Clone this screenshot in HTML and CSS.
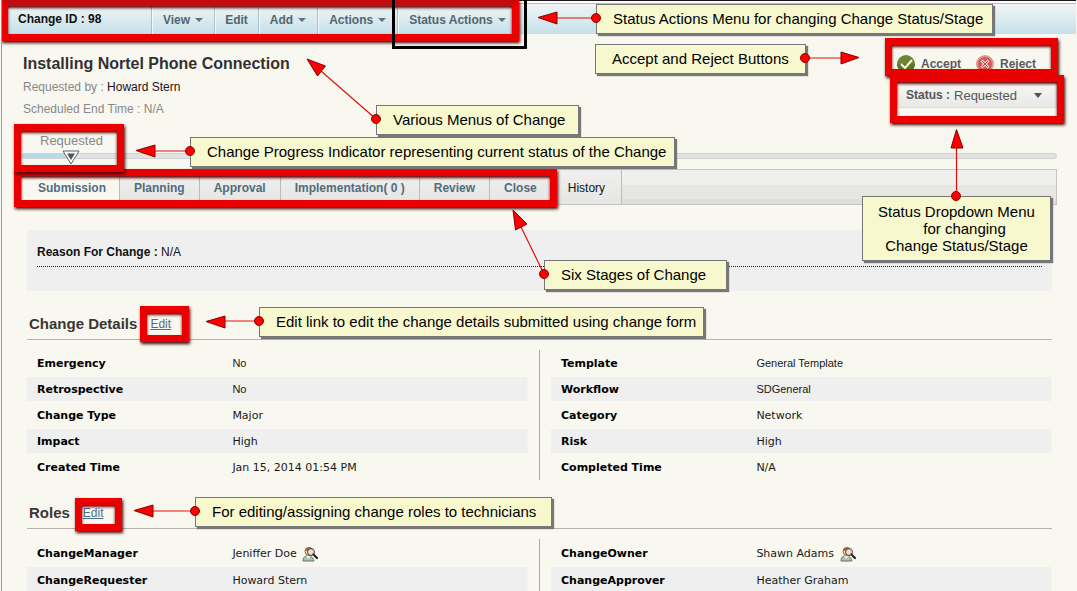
FILE: index.html
```html
<!DOCTYPE html>
<html lang="en">
<head>
<meta charset="utf-8">
<title>Change ID : 98</title>
<link rel="stylesheet" href="styles.css">
</head>
<body>
<svg class="defs" width="0" height="0" aria-hidden="true">
  <symbol id="person" viewBox="0 0 16 16">
    <path d="M1 15c0-4 2-5 5-5s5 1 6 5z" fill="#a9c4ae" stroke="#5f7465" stroke-width="1"/>
    <path d="M4 10l2 3 3-3z" fill="#f2efe2"/>
    <circle cx="7" cy="5.5" r="4" fill="#f4cfae" stroke="#9a6a45"/>
    <path d="M3 5c0-4 7-5 8-1-3 0-5 0-8 1z" fill="#9c5f38"/>
    <circle cx="9" cy="6" r="3.5" fill="#f8dfcc" fill-opacity=".8" stroke="#4b4b4b"/>
    <path d="M11.500 8.500l3.500 3.500" stroke="#222" stroke-width="2.200" stroke-linecap="round"/>
  </symbol>
</svg>
<div class="page">
  <nav class="toolbar">
    <span class="change-id">Change ID : 98</span>
    <button class="menu caret">View</button>
    <button class="menu">Edit</button>
    <button class="menu caret">Add</button>
    <button class="menu caret">Actions</button>
    <button class="menu caret">Status Actions</button>
  </nav>
  <main class="content">
    <header class="summary">
      <div class="request">
        <h1>Installing Nortel Phone Connection</h1>
        <p>Requested by : <b>Howard Stern</b></p>
        <p>Scheduled End Time : N/A</p>
      </div>
      <div class="decision">
        <div class="buttons">
          <button class="decide"><svg width="18" height="18" viewBox="0 0 18 18"><circle cx="9" cy="9" r="9" fill="#6f8536"/><path d="M0 9a9 9 0 0 0 18 0z" fill="#5c762c"/><path d="M4 9l4 4 7-8" fill="none" stroke="#fffbd0" stroke-width="2"/></svg>Accept</button>
          <button class="decide"><svg width="18" height="18" viewBox="0 0 18 18"><circle cx="9" cy="9" r="9" fill="#e39490"/><circle cx="9" cy="9" r="7" fill="#cf5a5a"/><path d="M5.500 5.500l7 7M12.500 5.500l-7 7" stroke="#f9dcd8" stroke-width="2.500"/><path d="M6 6l6 6M12 6l-6 6" stroke="#c93f41" stroke-width="1"/></svg>Reject</button>
        </div>
        <div class="status">
          <label for="status">Status :</label>
          <select id="status"><option>Requested</option></select>
        </div>
      </div>
    </header>
    <section class="progress">
      <span class="stage">Requested</span>
      <div class="track"><div class="done"></div>
        <svg class="marker" width="18" height="15" viewBox="0 0 18 15"><path d="M1 1h16L9 14z" fill="#fff" stroke="#56626a"/><path d="M5 3.500h8L9 10z" fill="#555"/></svg>
      </div>
    </section>
    <nav class="tabs">
      <button class="tab current">Submission</button>
      <button class="tab">Planning</button>
      <button class="tab">Approval</button>
      <button class="tab">Implementation( 0 )</button>
      <button class="tab">Review</button>
      <button class="tab">Close</button>
      <button class="tab history">History</button>
    </nav>
    <section class="reason"><p><b>Reason For Change :</b> N/A</p></section>
    <section class="block">
      <div class="block-head"><h2>Change Details</h2><a href="#">Edit</a></div>
      <div class="columns">
        <table>
          <tr><th scope="row">Emergency</th><td class="plain">No</td></tr>
          <tr><th scope="row">Retrospective</th><td class="plain">No</td></tr>
          <tr><th scope="row">Change Type</th><td>Major</td></tr>
          <tr><th scope="row">Impact</th><td>High</td></tr>
          <tr><th scope="row">Created Time</th><td>Jan 15, 2014 01:54 PM</td></tr>
        </table>
        <div class="divider"></div>
        <table>
          <tr><th scope="row">Template</th><td class="plain">General Template</td></tr>
          <tr><th scope="row">Workflow</th><td class="plain">SDGeneral</td></tr>
          <tr><th scope="row">Category</th><td>Network</td></tr>
          <tr><th scope="row">Risk</th><td>High</td></tr>
          <tr><th scope="row">Completed Time</th><td>N/A</td></tr>
        </table>
      </div>
    </section>
    <section class="block">
      <div class="block-head"><h2>Roles</h2><a href="#">Edit</a></div>
      <div class="columns roles">
        <table>
          <tr><th scope="row">ChangeManager</th><td>Jeniffer Doe <svg class="person" width="16" height="16"><use href="#person"/></svg></td></tr>
          <tr><th scope="row">ChangeRequester</th><td>Howard Stern</td></tr>
        </table>
        <div class="divider"></div>
        <table>
          <tr><th scope="row">ChangeOwner</th><td>Shawn Adams <svg class="person" width="16" height="16"><use href="#person"/></svg></td></tr>
          <tr><th scope="row">ChangeApprover</th><td>Heather Graham</td></tr>
        </table>
      </div>
    </section>
  </main>

  <div class="notes">
    <div class="frame frame-menus"></div>
    <div class="frame frame-accept"></div>
    <div class="frame frame-status"></div>
    <div class="frame frame-tabs"></div>
    <div class="frame frame-progress"></div>
    <div class="frame frame-details"></div>
    <div class="frame frame-roles"></div>
    <div class="outline"></div>
    <div class="note note-status-menu">Status Actions Menu for changing Change Status/Stage</div>
    <div class="note note-buttons">Accept and Reject Buttons</div>
    <div class="note note-menus">Various Menus of Change</div>
    <div class="note note-progress">Change Progress Indicator representing current status of the Change</div>
    <div class="note note-stages">Six Stages of Change</div>
    <div class="note note-details">Edit link to edit the change details submitted using change form</div>
    <div class="note note-roles">For editing/assigning change roles to technicians</div>
    <div class="note note-dropdown">Status Dropdown Menu<br><span>for changing</span><br>Change Status/Stage</div>
    <svg class="arrows" width="1077" height="591" viewBox="0 0 1077 591">
      <g stroke="#e01010" stroke-width="1.200">
        <path d="M596 18L556 18M805 58L841 58M376 119L321 71M190 151L154 151M544 274L521 227M259 321L224 321M195 511L152 511M956.500 196V148"/>
      </g>
      <g fill="#fb0000" stroke="#8c0000" stroke-width="1">
        <path d="M538 17.500L557 12V24ZM859 57.500L841 52V64ZM307 59L325.500 66L317.500 76ZM136 150.500L155 145V157ZM513 210L527 224L515.500 230ZM206 321.500L225 316V328ZM134 510.500L153 505V517ZM956.500 129.500L951 148H963Z"/>
        <circle cx="596" cy="18" r="4.500"/><circle cx="805" cy="58" r="4.500"/><circle cx="376" cy="119" r="4.500"/><circle cx="190" cy="151" r="4.500"/><circle cx="544" cy="274" r="4.500"/><circle cx="259" cy="321" r="4.500"/><circle cx="195" cy="511" r="4.500"/><circle cx="956" cy="196" r="4.500"/>
      </g>
    </svg>
  </div>
</div>
</body>
</html>
```

FILE: styles.css
```css
* { box-sizing: border-box; }
body {
  margin: 0;
  background: #f8f8f0;
  color: #111;
  font: 12px/16px "Liberation Sans", Arial, sans-serif;
}
h1, h2, p { margin: 0; }
button { border: 0; background: none; padding: 0; font: inherit; color: inherit; }
.defs { position: absolute; }

.page {
  position: relative;
  margin: 0 1px;
  border-left: 1px solid #7fa3af;
  overflow: hidden;
}

/* Toolbar */
.toolbar {
  display: flex;
  height: 34px;
  border-top: 1px solid #1c1418;
  background: linear-gradient(#fff 0 2px, #b4bcc2 2px 3px, #f0f5f5 3px, #e0edf0 15px, #c4e0ea);
  font-weight: bold;
}
.change-id { width: 149px; padding: 10px 16px 0; line-height: 16px; }
.menu {
  display: flex;
  align-items: center;
  gap: 5px;
  margin-top: 3px;
  padding: 2px 10px 0;
  border-left: 1px solid #a9c0ca;
  box-shadow: inset 1px 0 #f4fafb;
  color: #52666f;
}
.caret { padding-left: 11px; padding-right: 11px; }
.caret::after {
  content: "";
  border: 4px solid transparent;
  border-top-color: #61727a;
  border-bottom: 0;
}

/* Header */
.content { padding: 0 19px 0 19px; }
.summary { display: flex; justify-content: space-between; padding: 18px 0 0 2px; }
h1 { font-size: 16px; line-height: 24px; color: #353030; }
.request p { line-height: 22px; color: #888; }
.request b { font-weight: normal; color: #1c101c; }
.decision { width: 160px; }
.buttons { display: flex; gap: 15px; padding-top: 3px; }
.decide {
  display: flex;
  align-items: center;
  gap: 6px;
  height: 18px;
  font-weight: bold;
  color: #5a5a5a;
}
.status {
  position: relative;
  display: flex;
  align-items: center;
  gap: 4px;
  height: 26px;
  margin-top: 9px;
  padding-left: 8px;
  border: 1px solid #ddd;
  background: linear-gradient(#f7f7f4, #e8e8e6);
  color: #555;
}
.status label { font-weight: bold; }
.status select {
  flex: 1;
  align-self: stretch;
  appearance: none;
  border: 0;
  padding: 0;
  font: 13px "Liberation Sans", Arial, sans-serif;
  color: #555;
  background: none;
}
.status::after {
  content: "";
  position: absolute;
  right: 14px;
  top: 10px;
  border: 4px solid transparent;
  border-top: 5px solid #555;
  border-bottom: 0;
}

/* Progress */
.progress { padding-top: 12px; }
.stage { display: block; padding-left: 19px; font-size: 13px; line-height: 18px; color: #888; }
.track {
  position: relative;
  height: 6px;
  margin-top: 3px;
  border: 1px solid #d2d2d2;
  border-radius: 3px;
  background: #e2e2e2;
}
.done { width: 48px; height: 4px; background: #b3dcea; }
.marker { position: absolute; left: 40px; top: -4px; }

/* Tabs */
.tabs {
  display: flex;
  height: 36px;
  margin-top: 10px;
  border: 1px solid #c4c4c4;
  background: linear-gradient(#efefee 0 15px, #e7e7e1 15px 29px, #dedede 29px);
}
.tab {
  padding: 2px 14px 0;
  border-right: 1px solid #bbb;
  background: linear-gradient(#f0f0f0, #e5e5e3);
  font-weight: bold;
  color: #506c7d;
}
.tab.current { padding-left: 16px; padding-right: 13px; background: #f8f8f1; }
.tab.history { padding-left: 16px; padding-right: 16px; font-weight: normal; color: #111; }

/* Reason */
.reason { margin: 25px 5px 0 6px; padding: 14px 10px 24px; background: #efefef; }
.reason p { padding-bottom: 6px; border-bottom: 1px dotted #222; }

/* Detail blocks */
.block { margin: 0 5px 0 6px; }
.block-head {
  display: flex;
  align-items: center;
  gap: 13px;
  height: 49px;
  padding: 18px 2px 0;
  border-bottom: 1px solid #b2b2b2;
}
h2 { font-size: 15px; line-height: 20px; color: #3a3636; }
.block-head a { color: #4a7088; }
.columns { display: grid; grid-template-columns: 1fr 1px 1fr; gap: 11px; padding-top: 10px; }
.divider { background: #aaa; }
table {
  width: 100%;
  height: min-content;
  table-layout: fixed;
  border-collapse: collapse;
  font: 11px/16px "DejaVu Sans", Verdana, sans-serif;
}
th { width: 39%; text-align: left; }
th, td { height: 26px; padding: 2px 0 0 10px; color: #181818; }
th { color: #000; }
tr:nth-child(even) { background: linear-gradient(transparent 1px, #efefef 1px 25px, transparent 25px); }
td.plain { padding-top: 0; font-family: "Liberation Sans", Arial, sans-serif; }
.roles th, .roles td { height: 27px; }
.person { vertical-align: middle; margin-left: 2px; }

/* Annotations drawn over the page */
.notes { position: absolute; left: -2px; top: 0; }
.notes > * { position: absolute; }
.frame {
  border: 7px solid #ea0000;
  box-shadow: 1px 2px 3px #400, inset 0 2px 3px #600;
}
.frame-menus { left: 1px; top: -1px; width: 518px; height: 42px; border-top-color: #c40c0c; }
.frame-accept { left: 885px; top: 38px; width: 173px; height: 38px; }
.frame-status { left: 890px; top: 75px; width: 174px; height: 48px; }
.frame-tabs { left: 14px; top: 169px; width: 543px; height: 38px; }
.frame-progress { left: 14px; top: 124px; width: 110px; height: 48px; }
.frame-details { left: 140px; top: 306px; width: 49px; height: 36px; }
.frame-roles { left: 75px; top: 498px; width: 47px; height: 33px; }
.outline { left: 392px; top: -3px; width: 135px; height: 52px; border: 3px solid #000; }
.note {
  padding: 5px 16px;
  border: 1px solid #777;
  background: #f8f8cf;
  box-shadow: 2px 2px 1px #777;
  font-size: 15px;
  line-height: 18px;
  white-space: nowrap;
  color: #000;
}
.note-status-menu { left: 596px; top: 4px; width: 397px; }
.note-buttons { left: 595px; top: 44px; width: 211px; }
.note-menus { left: 376px; top: 105px; width: 203px; }
.note-progress { left: 190px; top: 137px; width: 485px; }
.note-stages { left: 544px; top: 260px; width: 183px; }
.note-details { left: 259px; top: 307px; width: 445px; }
.note-roles { left: 195px; top: 497px; width: 357px; }
.note-dropdown { left: 862px; top: 196px; width: 189px; text-align: center; padding: 6px 0; line-height: 17px; }
.note-dropdown span { padding-left: 16px; }
.arrows { left: 0; top: 0; }
```
